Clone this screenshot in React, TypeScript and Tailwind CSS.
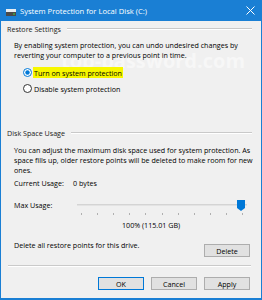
import React from "react";

function Radio({ checked }: { checked: boolean }) {
  return (
    <svg width="9" height="9" viewBox="0 0 9 9" className="shrink-0">
      <circle cx="4.5" cy="4.5" r="4" fill="#ffffff" stroke={checked ? "#0078d7" : "#333333"} strokeWidth="1" />
      {checked && <circle cx="4.5" cy="4.5" r="2.2" fill="#0078d7" />}
    </svg>
  );
}

function GroupHeader({ label }: { label: string }) {
  return (
    <div className="flex items-center h-[10px]">
      <span className="text-[#1a1a1a] whitespace-nowrap">{label}</span>
      <div className="flex-1 ml-[6px] flex flex-col">
        <div className="h-px bg-[#c9c9c9]" />
        <div className="h-px bg-[#ffffff]" />
      </div>
    </div>
  );
}

function Btn({ label, primary }: { label: string; primary?: boolean }) {
  return (
    <div
      className={
        "w-[46px] h-[13px] flex items-center justify-center bg-[#e1e1e1] border " +
        (primary ? "border-[#0078d7]" : "border-[#adadad]")
      }
    >
      {label}
    </div>
  );
}

export default function App() {
  const ticks = Array.from({ length: 11 }, (_, i) => 4 + i * 16.1);
  return (
    <div
      className="w-[262px] h-[300px] bg-[#1a7fd4] flex flex-col text-[7.15px] leading-[10px] text-black whitespace-nowrap"
      style={{ fontFamily: '"Open Sans", "Noto Sans", sans-serif' }}
    >
      {/* Title bar */}
      <div className="h-[21px] flex items-center pl-[6px] pr-[6px] text-white">
        <svg width="10" height="7" viewBox="0 0 10 7" className="shrink-0 mt-[3px]">
          <rect x="0" y="0" width="10" height="3" fill="#e8eef2" />
          <rect x="0" y="3" width="10" height="4" fill="#4a4a4a" />
          <rect x="7" y="4.5" width="2" height="1" fill="#3ddc3d" />
        </svg>
        <span className="ml-[4px] text-[7.6px]">System Protection for Local Disk (C:)</span>
        <svg width="9" height="9" viewBox="0 0 9 9" className="ml-auto mr-[1px]">
          <path d="M0.5 0.5 L8.5 8.5 M8.5 0.5 L0.5 8.5" stroke="#ffffff" strokeWidth="1" />
        </svg>
      </div>

      {/* Body */}
      <div className="flex-1 mx-[1px] mb-[2px] bg-[#f0f0f0] relative pl-[6px] pr-[9px] flex flex-col">
        {/* watermark */}
        <div className="absolute left-[60px] top-[30px] text-[20px] leading-[20px] font-bold text-[#f7f7f7] pointer-events-none select-none">
          top-password.com
        </div>

        <div className="mt-[3px] relative">
          <GroupHeader label="Restore Settings" />
        </div>
        <div className="mt-[6px] pl-[7px] relative">
          By enabling system protection, you can undo undesired changes by
          <br />
          reverting your computer to a previous point in time.
        </div>
        <div className="mt-[7px] h-[11px] pl-[16px] flex items-center relative">
          <Radio checked />
          <span className="ml-[1px] bg-[#f7f700] px-[1px] h-[11px] flex items-center">Turn on system protection</span>
        </div>
        <div className="mt-[5px] h-[11px] pl-[16px] flex items-center">
          <Radio checked={false} />
          <span className="ml-[2px]">Disable system protection</span>
        </div>

        <div className="mt-[34px]">
          <GroupHeader label="Disk Space Usage" />
        </div>
        <div className="mt-[7px] pl-[7px]">
          You can adjust the maximum disk space used for system protection. As
          <br />
          space fills up, older restore points will be deleted to make room for new
          <br />
          ones.
        </div>
        <div className="mt-[3px] h-[10px] pl-[7px] flex">
          <span className="w-[59px]">Current Usage:</span>
          <span>0 bytes</span>
        </div>
        <div className="mt-[12px] h-[18px] pl-[7px] flex">
          <span className="w-[63px]">Max Usage:</span>
          <div className="flex-1 relative">
            <div className="absolute left-0 right-[5px] top-[4px] h-[2px] bg-[#e3e3e3] border-t border-[#d4d4d4]" />
            {ticks.map((x, i) => (
              <div key={i} className="absolute top-[13px] w-px h-[2px] bg-[#b0b0b0]" style={{ left: x }} />
            ))}
            <svg width="8" height="11" viewBox="0 0 8 11" className="absolute left-[160px] top-0">
              <path d="M0 0 H8 V8 L4 11 L0 8 Z" fill="#0078d7" />
            </svg>
          </div>
        </div>
        <div className="mt-[2px] h-[10px] pl-[115px]">100% (115.01 GB)</div>
        <div className="mt-[10px] pl-[7px] pr-[2px] flex justify-between items-start">
          <span>Delete all restore points for this drive.</span>
          <div className="mt-[4px]">
            <Btn label="Delete" />
          </div>
        </div>
        <div className="mt-[8px] flex flex-col pl-[1px] pr-[1px]">
          <div className="h-px bg-[#cacaca]" />
          <div className="h-px bg-[#ffffff]" />
        </div>
        <div className="mt-[10px] pr-[2px] flex justify-end gap-[7px]">
          <Btn label="OK" primary />
          <Btn label="Cancel" />
          <Btn label="Apply" />
        </div>
      </div>
    </div>
  );
}
